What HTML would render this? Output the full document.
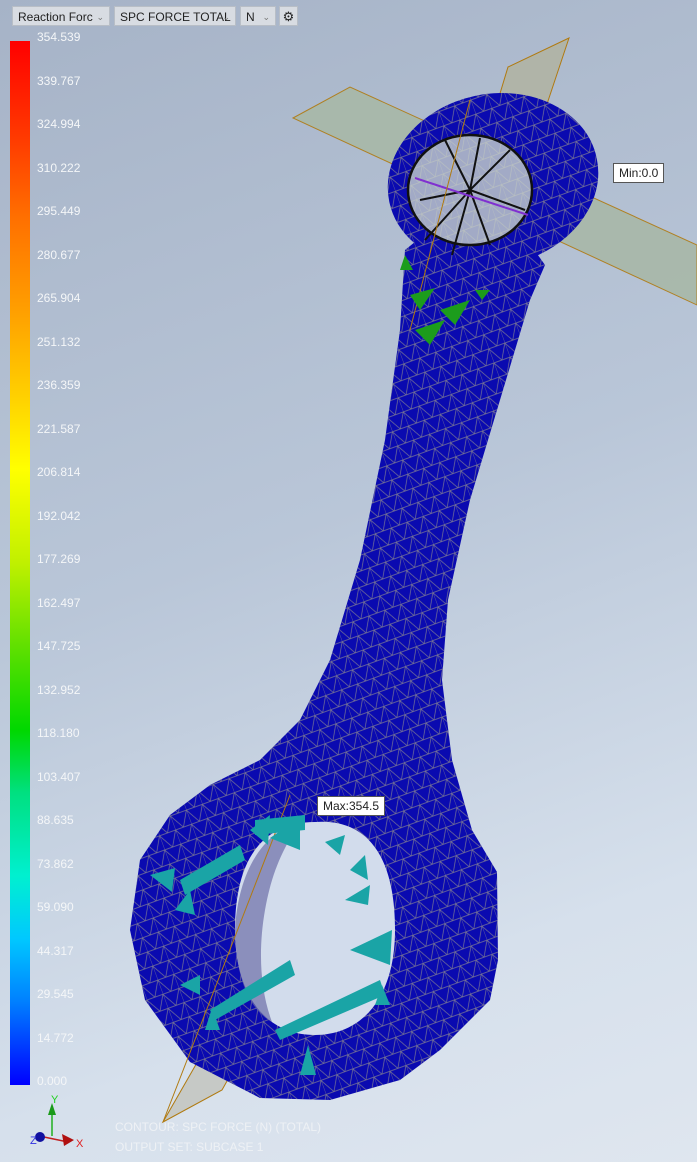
<!DOCTYPE html>
<html><head><meta charset="utf-8"><style>
html,body{margin:0;padding:0}
body{width:697px;height:1162px;overflow:hidden;position:relative;font-family:"Liberation Sans",sans-serif;background:linear-gradient(160deg,#a6b3c7 0%,#b9c6d8 45%,#d6e0ec 80%,#dfe6ef 100%)}
.dd{position:absolute;top:6px;height:20px;background:#d8dce2;border:1px solid #b8bec6;font-size:12px;color:#222;line-height:20px;padding-left:5px;box-sizing:border-box}
.dd span{position:absolute;right:5px;top:0;font-size:9px;color:#777}
.lbl{position:absolute;left:37px;font-size:12px;color:#f4f6f8}
.bar{position:absolute;left:10px;top:41px;width:20px;height:1044px;background:linear-gradient(to bottom,#ff0000 0%,#ff3800 9%,#ff7000 17%,#ffa000 26%,#ffd000 34%,#ffff00 41%,#c0f000 50%,#60e000 58%,#00d800 66%,#00e080 72%,#00f0d0 80%,#00c8ff 86%,#0080ff 92%,#0030ff 97%,#0000ff 100%)}
.tag{position:absolute;background:#fff;border:1px solid #555;font-size:12px;color:#222;padding:1px 5px;height:16px;line-height:16px}
.cap{position:absolute;left:115px;font-size:12px;color:#eef1f5}
</style></head><body>
<div class="dd" style="left:12px;width:98px">Reaction Forc<span>⌄</span></div>
<div class="dd" style="left:114px;width:122px">SPC FORCE TOTAL<span>⌄</span></div>
<div class="dd" style="left:240px;width:36px">N<span>⌄</span></div>
<div class="dd" style="left:279px;width:19px;padding:0;text-align:center;font-size:13px">⚙</div>
<div class="bar"></div>
<div class="lbl" style="top:30px">354.539</div><div class="lbl" style="top:74px">339.767</div><div class="lbl" style="top:117px">324.994</div><div class="lbl" style="top:161px">310.222</div><div class="lbl" style="top:204px">295.449</div><div class="lbl" style="top:248px">280.677</div><div class="lbl" style="top:291px">265.904</div><div class="lbl" style="top:335px">251.132</div><div class="lbl" style="top:378px">236.359</div><div class="lbl" style="top:422px">221.587</div><div class="lbl" style="top:465px">206.814</div><div class="lbl" style="top:509px">192.042</div><div class="lbl" style="top:552px">177.269</div><div class="lbl" style="top:596px">162.497</div><div class="lbl" style="top:639px">147.725</div><div class="lbl" style="top:683px">132.952</div><div class="lbl" style="top:726px">118.180</div><div class="lbl" style="top:770px">103.407</div><div class="lbl" style="top:813px">88.635</div><div class="lbl" style="top:857px">73.862</div><div class="lbl" style="top:900px">59.090</div><div class="lbl" style="top:944px">44.317</div><div class="lbl" style="top:987px">29.545</div><div class="lbl" style="top:1031px">14.772</div><div class="lbl" style="top:1074px">0.000</div>

<svg width="697" height="1162" style="position:absolute;left:0;top:0">
<defs>
<pattern id="m" width="17" height="15" patternUnits="userSpaceOnUse" patternTransform="rotate(-20)">
<path d="M0 0H17M0 15H17M0 0L8.5 15L17 0M0 0V15" stroke="#a8a488" stroke-width="0.7" fill="none" opacity="0.7"/>
</pattern>
<clipPath id="bc">
<path d="M545,265 L530,300 L500,400 L470,500 L448,600 L442,680 L452,760 L472,830 L497,872 L498,960 L490,1000 L440,1050 L400,1080 L330,1100 L260,1098 L190,1062 L145,1000 L130,930 L140,860 L170,815 L210,785 L260,760 L300,720 L330,660 L360,560 L385,440 L400,330 L405,250 L430,230 L520,230 Z"/>
<ellipse cx="493" cy="180" rx="106" ry="86" transform="rotate(-12 493 180)"/>
</clipPath>
</defs>
<polygon points="293,118 350,87 697,245 697,305" fill="#a8b8a8" stroke="#b07a10" stroke-width="1" opacity="0.9"/>
<polygon points="508,67 569,38 545,110 495,110" fill="#b0b4a8" stroke="#b07a10" stroke-width="1"/>
<polygon points="163,1122 222,1090 250,1040 210,1040" fill="#c6c9c6" stroke="#b07a10" stroke-width="1"/>
<g clip-path="url(#bc)">
<rect width="697" height="1162" fill="#0a0ab0"/>
<rect width="697" height="1162" fill="url(#m)"/>
</g>
<ellipse cx="470" cy="190" rx="62" ry="55" fill="#c8d2cc" opacity="0.8"/>
<ellipse cx="470" cy="190" rx="62" ry="55" fill="none" stroke="#111" stroke-width="2.5"/>
<path d="M470 190L445 140M470 190L480 138M470 190L510 150M470 190L525 210M470 190L452 255M470 190L420 200M470 190L425 240M470 190L490 245" stroke="#111" stroke-width="2"/>
<line x1="415" y1="178" x2="528" y2="215" stroke="#8030d0" stroke-width="2"/>
<path d="M315,822 C370,818 395,860 395,930 C395,1000 360,1035 315,1035 C262,1035 235,990 235,930 C235,860 262,822 315,822Z" fill="#d2dcec"/>
<path d="M300,823 C265,830 238,870 235,930 C236,980 250,1010 272,1022 C260,990 258,950 265,910 C272,870 285,845 300,823Z" fill="#6c6ea8" opacity="0.7"/>
<line x1="290" y1="795" x2="163" y2="1122" stroke="#b07a10" stroke-width="1"/>
<line x1="470" y1="100" x2="410" y2="330" stroke="#b07a10" stroke-width="1"/>
<g fill="#1aa4a6">
<polygon points="250,830 270,815 268,845"/><polygon points="270,838 300,818 300,850"/><polygon points="150,875 175,868 172,892"/><polygon points="175,910 190,890 195,915"/><polygon points="325,842 345,835 340,855"/><polygon points="350,870 365,855 368,880"/><polygon points="345,900 370,885 368,905"/><polygon points="350,950 392,930 390,965"/><polygon points="180,985 200,975 200,995"/><polygon points="205,1030 212,1008 220,1030"/><polygon points="300,1075 308,1045 316,1075"/><polygon points="375,1005 382,985 390,1005"/><polygon points="210,1010 290,960 295,975 215,1020" /><polygon points="275,1030 380,980 385,995 280,1040"/><polygon points="180,880 240,845 245,860 185,895"/><polygon points="255,820 305,815 305,830 255,835"/>
</g>
<g fill="#1c9c1c">
<polygon points="405,255 413,270 400,270"/><polygon points="410,295 435,288 420,310"/><polygon points="415,330 445,320 430,345"/><polygon points="440,310 470,300 455,325"/><polygon points="475,290 490,290 482,300"/>
</g>
<g stroke-width="1.5">
<line x1="52" y1="1108" x2="52" y2="1136" stroke="#20b020"/><polygon points="48,1115 56,1115 52,1103" fill="#1a9a1a"/>
<line x1="44" y1="1137" x2="68" y2="1142" stroke="#c02020"/><polygon points="62,1134 74,1140 64,1146" fill="#b01010"/>
<circle cx="40" cy="1137" r="5" fill="#1010a0"/>
<text x="51" y="1103" font-size="11" fill="#20d020" font-family="Liberation Sans">Y</text>
<text x="76" y="1147" font-size="11" fill="#e02020" font-family="Liberation Sans">X</text>
<text x="30" y="1144" font-size="11" fill="#3030e0" font-family="Liberation Sans">Z</text>
</g>
</svg>
<div class="tag" style="left:613px;top:163px">Min:0.0</div>
<div class="tag" style="left:317px;top:796px">Max:354.5</div>
<div class="cap" style="top:1120px">CONTOUR: SPC FORCE (N) (TOTAL)</div>
<div class="cap" style="top:1140px">OUTPUT SET: SUBCASE 1</div>
</body></html>
